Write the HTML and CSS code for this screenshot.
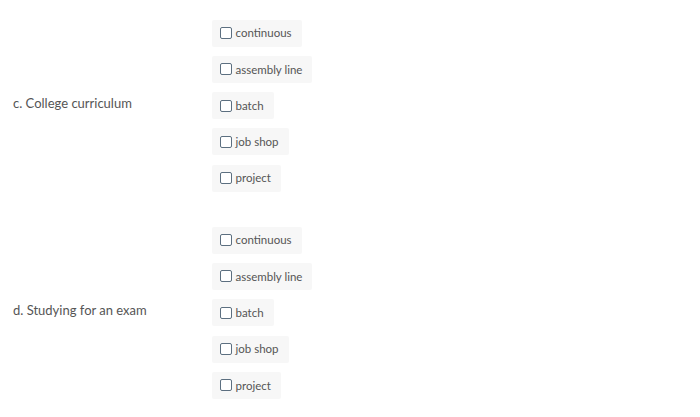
FILE: index.html
```html
<!DOCTYPE html>
<html>
<head>
<meta charset="utf-8">
<link rel="stylesheet" href="styles.css">
</head>
<body>
<div class="page">
  <div class="group">
    <div class="label">c. College curriculum</div>
    <div class="options">
      <label class="chip"><span class="box"></span><span class="txt">continuous</span></label>
      <label class="chip"><span class="box"></span><span class="txt">assembly line</span></label>
      <label class="chip"><span class="box"></span><span class="txt">batch</span></label>
      <label class="chip"><span class="box"></span><span class="txt">job shop</span></label>
      <label class="chip"><span class="box"></span><span class="txt">project</span></label>
    </div>
  </div>
  <div class="group">
    <div class="label">d. Studying for an exam</div>
    <div class="options">
      <label class="chip"><span class="box"></span><span class="txt">continuous</span></label>
      <label class="chip"><span class="box"></span><span class="txt">assembly line</span></label>
      <label class="chip"><span class="box"></span><span class="txt">batch</span></label>
      <label class="chip"><span class="box"></span><span class="txt">job shop</span></label>
      <label class="chip"><span class="box"></span><span class="txt">project</span></label>
    </div>
  </div>
</div>
</body>
</html>
```
FILE: styles.css
```css
html, body {
  margin: 0;
  padding: 0;
  background: #ffffff;
}
body {
  font-family: Lato, "Open Sans", sans-serif;
  color: #555555;
}
.page {
  display: flex;
  flex-direction: column;
  gap: 35px;
  padding-top: 19.5px;
}
.group {
  display: flex;
  align-items: center;
}
.label {
  width: 199px;
  padding-left: 13px;
  font-size: 13px;
  margin-top: -6px;
}
.options {
  display: flex;
  flex-direction: column;
  align-items: flex-start;
  gap: 9.3px;
}
.chip {
  display: flex;
  align-items: center;
  height: 27px;
  padding: 0 10px 0 7px;
  background: #f7f7f7;
  border-radius: 2px;
  font-size: 11.5px;
}
.box {
  width: 10px;
  height: 10px;
  border: 1.5px solid #5c6f80;
  border-radius: 2px;
  background: #fff;
  margin-right: 4px;
  margin-left: 0.5px;
}
.txt {
  line-height: 1;
}
```
